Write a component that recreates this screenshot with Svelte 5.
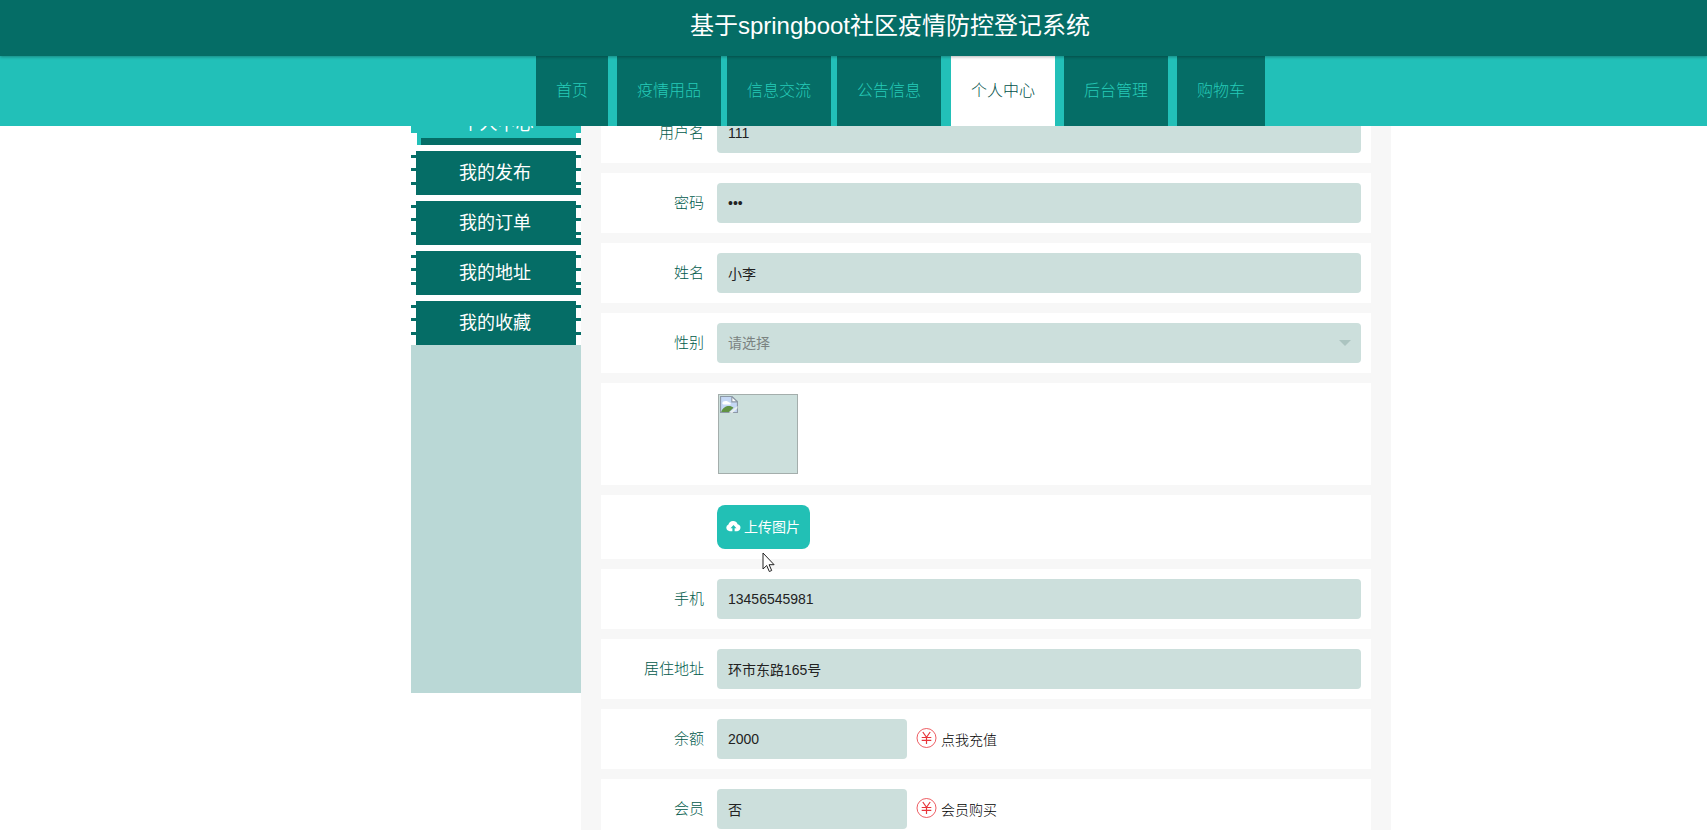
<script>
  const navItems = ['首页', '疫情用品', '信息交流', '公告信息', '个人中心', '后台管理', '购物车']
  const menuItems = ['个人中心', '我的发布', '我的订单', '我的地址', '我的收藏']
  const activeNav = '个人中心'
  const activeMenu = '个人中心'

  let user = {
    username: '111',
    password: '111',
    name: '小李',
    sex: '',
    phone: '13456545981',
    address: '环市东路165号',
    balance: '2000',
    vip: '否'
  }
</script>

<svelte:head>
  <title>个人中心</title>
</svelte:head>

<div class="page">
  <header>
    <h1>基于springboot社区疫情防控登记系统</h1>
  </header>

  <nav>
    {#each navItems as item}
      <a href="#top" class:active={item === activeNav}>{item}</a>
    {/each}
  </nav>

  <div class="content">
    <aside>
      <ul>
        {#each menuItems as item}
          <li class:active={item === activeMenu}><a href="#top">{item}</a></li>
        {/each}
      </ul>
    </aside>

    <form autocomplete="off">
      <div class="row">
        <label for="username">用户名</label>
        <input id="username" type="text" bind:value={user.username}>
      </div>
      <div class="row">
        <label for="password">密码</label>
        <input id="password" type="password" bind:value={user.password}>
      </div>
      <div class="row">
        <label for="name">姓名</label>
        <input id="name" type="text" bind:value={user.name}>
      </div>
      <div class="row">
        <label for="sex">性别</label>
        <div class="select">
          <input id="sex" type="text" placeholder="请选择" readonly value={user.sex}>
          <i class="caret"></i>
        </div>
      </div>
      <div class="row photo-row">
        <div class="photo">
          <svg width="18" height="17" viewBox="0 0 16 16" preserveAspectRatio="none">
            <path d="M.5.5h10l5 5v10H.5z" fill="#c5d8f5" stroke="#8d99a6" />
            <path d="M2 7c0-3 5-3 6-1 2 0 2 2 1 2H3z" fill="#fff" />
            <path d="M1 15c2-6 8-7 11-4l-4 4z" fill="#619344" />
            <path d="M8 15.5l7.5-6v2L11 16z" fill="#e8f0ef" />
            <path d="M10.5.5v5h5z" fill="#fff" stroke="#8d99a6" />
          </svg>
        </div>
      </div>
      <div class="row upload-row">
        <button type="button" class="upload">
          <svg width="15" height="12" viewBox="0 0 16 12">
            <path d="M4 11.5a3.7 3.7 0 0 1-1.4-7.1A5.2 5.2 0 0 1 12.4 4 3.8 3.8 0 0 1 12 11.5H9.2V8.3h2L8 4.8 4.8 8.3h2v3.2z" fill="#fff" />
          </svg>
          <span>上传图片</span>
        </button>
      </div>
      <div class="row">
        <label for="phone">手机</label>
        <input id="phone" type="text" bind:value={user.phone}>
      </div>
      <div class="row">
        <label for="address">居住地址</label>
        <input id="address" type="text" bind:value={user.address}>
      </div>
      <div class="row">
        <label for="balance">余额</label>
        <input id="balance" class="short" type="text" bind:value={user.balance}>
        <a class="pay" href="#top">
          <svg width="21" height="20" viewBox="0 0 20 20" fill="none" stroke="#e8343a">
            <circle cx="10" cy="10" r="9.5" stroke-width=".8" />
            <path d="M6.3 4 10 9.3 13.7 4M10 9.3v6.7M5.2 9.5h9.6M5.2 12.4h9.6" stroke-width="1.2" />
          </svg>
          <span>点我充值</span>
        </a>
      </div>
      <div class="row">
        <label for="vip">会员</label>
        <input id="vip" class="short" type="text" bind:value={user.vip}>
        <a class="pay" href="#top">
          <svg width="21" height="20" viewBox="0 0 20 20" fill="none" stroke="#e8343a">
            <circle cx="10" cy="10" r="9.5" stroke-width=".8" />
            <path d="M6.3 4 10 9.3 13.7 4M10 9.3v6.7M5.2 9.5h9.6M5.2 12.4h9.6" stroke-width="1.2" />
          </svg>
          <span>会员购买</span>
        </a>
      </div>
    </form>
  </div>

  <svg class="pointer" width="14" height="21" viewBox="0 0 14 21">
    <path d="M1 1v16l3.7-3.5 2.6 6 2.4-1-2.6-5.8h5z" fill="#fff" stroke="#222" />
  </svg>
</div>

<style>
  :global(body) {
    background: #fff;
  }
  .page {
    position: relative;
    display: flex;
    flex-direction: column;
    height: 830px;
    overflow: hidden;
    font-family: 'Liberation Sans', 'Noto Sans CJK SC', sans-serif;
    font-weight: 300;
  }
  a {
    text-decoration: none;
  }
  header {
    flex: none;
    height: 56px;
    background: #056d66;
    box-shadow: 0 1px 3px rgba(0, 0, 0, 0.3);
    z-index: 1;
  }
  h1 {
    margin: 0;
    padding-left: 73px;
    text-align: center;
    font-size: 24px;
    font-weight: 400;
    line-height: 52px;
    color: #fff;
  }
  nav {
    flex: none;
    display: flex;
    height: 70px;
    padding-left: 536px;
    background: #22c0b8;
  }
  nav a {
    padding: 0 20px;
    margin-right: 9px;
    font-size: 16px;
    line-height: 70px;
    color: #26cbb8;
    background: #056d66;
  }
  nav a:nth-child(2),
  nav a:nth-child(3) {
    margin-right: 6px;
  }
  nav a:nth-child(4) {
    margin-right: 10px;
  }
  nav a.active {
    color: #004f48;
    background: #fff;
  }
  .content {
    flex: 1;
    display: flex;
    align-items: flex-start;
    min-height: 0;
    padding-left: 411px;
    overflow: hidden;
  }
  aside {
    width: 170px;
    height: 592px;
    margin-top: -25px;
    background: #bad8d6;
  }
  ul {
    margin: 0;
    padding: 0;
    list-style: none;
    background: #fff;
  }
  li {
    height: 44px;
    margin-bottom: 6px;
    padding: 0 5px;
    background:
      linear-gradient(#056d66, #056d66) right bottom / 5px 7px no-repeat,
      repeating-linear-gradient(transparent 0 4px, #056d66 4px 7px, transparent 7px 13.4px);
  }
  li:last-child {
    margin-bottom: 0;
    background: repeating-linear-gradient(transparent 0 4px, #056d66 4px 7px, transparent 7px 13.4px);
  }
  li a {
    display: block;
    height: 44px;
    padding-right: 2px;
    text-align: center;
    font-size: 18px;
    font-weight: 400;
    line-height: 44px;
    color: #fff;
    background: #056d66;
  }
  li.active {
    padding: 0;
    background:
      linear-gradient(#22c0b8, #22c0b8) 0 0 / 170px 32px no-repeat,
      linear-gradient(#22c0b8, #22c0b8) 6px 0 / 159px 37px no-repeat,
      linear-gradient(#22c0b8, #22c0b8) 6px 37px / 4px 7px no-repeat,
      linear-gradient(#056d66, #056d66) 10px 37px / 160px 7px no-repeat;
  }
  li.active a {
    padding: 0 0 0 3px;
    line-height: 46px;
    background: none;
  }
  form {
    width: 770px;
    margin-top: -23px;
    padding: 0 20px;
    background: #f7f7f7;
  }
  .row {
    display: flex;
    align-items: center;
    box-sizing: border-box;
    height: 60px;
    margin-bottom: 10px;
    padding: 0 10px;
    background: #fff;
  }
  label {
    width: 93px;
    margin-right: 13px;
    text-align: right;
    font-size: 15px;
    line-height: 22px;
    color: #005a4b;
  }
  input {
    flex: 1;
    box-sizing: border-box;
    height: 40px;
    padding: 0 12px 0 11px;
    border: 0;
    border-radius: 4px;
    outline: 0;
    font: inherit;
    font-size: 14px;
    font-weight: 400;
    color: #222;
    background: #ccdfdc;
  }
  input::placeholder {
    color: #7b8381;
  }
  input.short {
    flex: none;
    width: 190px;
  }
  .select {
    position: relative;
    flex: 1;
    display: flex;
  }
  .caret {
    position: absolute;
    top: 17px;
    right: 10px;
    border: 6px solid transparent;
    border-top-color: #abc4c0;
    border-bottom: 0;
  }
  .photo-row {
    height: 102px;
    padding-left: 117px;
  }
  .photo {
    box-sizing: border-box;
    width: 80px;
    height: 80px;
    padding: 1px;
    border: 1px solid #a4aeac;
    background: #ccdfdc;
  }
  .photo svg {
    display: block;
  }
  .upload-row {
    height: 64px;
    padding-left: 116px;
  }
  .upload {
    display: flex;
    align-items: center;
    justify-content: center;
    gap: 3px;
    width: 93px;
    height: 44px;
    padding: 0 1px 2px 0;
    border: 0;
    border-radius: 8px;
    font: inherit;
    font-size: 14px;
    font-weight: 400;
    color: #fff;
    background: #22c0b5;
  }
  .pay {
    display: flex;
    align-items: center;
    margin-left: 9px;
    font-size: 14px;
    color: #000;
  }
  .pay svg {
    margin: 0 4px 3px 0;
  }
  .pointer {
    position: absolute;
    top: 552px;
    left: 762px;
  }
</style>
